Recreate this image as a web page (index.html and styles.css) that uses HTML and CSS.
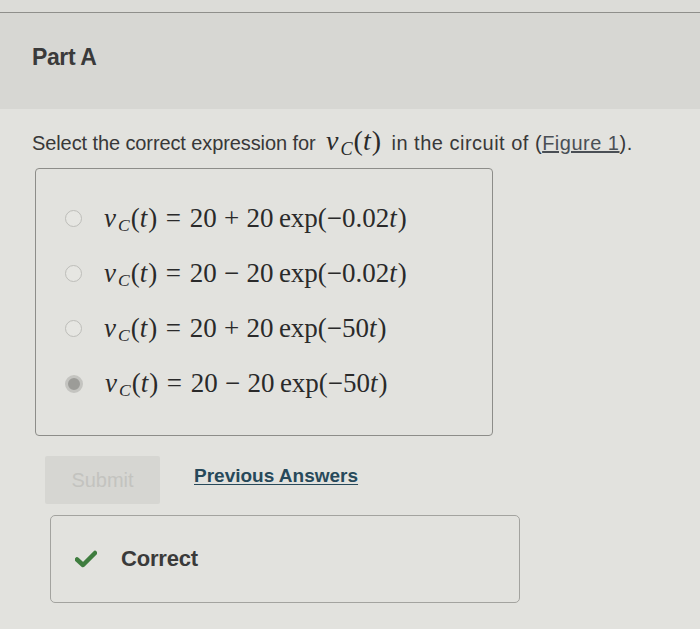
FILE: index.html
```html
<!DOCTYPE html>
<html>
<head>
<meta charset="utf-8">
<link rel="stylesheet" href="styles.css">
</head>
<body>
<div class="topstrip"></div>
<header class="part-header"><h2 class="part-title">Part A</h2></header>
<main class="content">
  <p class="question">Select the correct expression for <span class="m"><i>v</i><sub><i>C</i></sub>(<i>t</i>)</span> <span class="tail">in the circuit of (<a class="fig" href="#">Figure 1</a>).</span></p>
  <div class="options">
    <label class="opt"><span class="radio"></span><span class="m expr"><i>v</i><sub><i>C</i></sub>(<i>t</i>)<span class="rel">=</span>20<span class="bin">+</span>20<span class="fn">exp</span>(−0.02<i>t</i>)</span></label>
    <label class="opt"><span class="radio"></span><span class="m expr"><i>v</i><sub><i>C</i></sub>(<i>t</i>)<span class="rel">=</span>20<span class="bin">−</span>20<span class="fn">exp</span>(−0.02<i>t</i>)</span></label>
    <label class="opt"><span class="radio"></span><span class="m expr"><i>v</i><sub><i>C</i></sub>(<i>t</i>)<span class="rel">=</span>20<span class="bin">+</span>20<span class="fn">exp</span>(−50<i>t</i>)</span></label>
    <label class="opt"><span class="radio checked"></span><span class="m expr"><i>v</i><sub><i>C</i></sub>(<i>t</i>)<span class="rel">=</span>20<span class="bin">−</span>20<span class="fn">exp</span>(−50<i>t</i>)</span></label>
  </div>
  <div class="actions">
    <button class="submit" disabled>Submit</button>
    <a class="prev" href="#">Previous Answers</a>
  </div>
  <div class="feedback">
    <svg class="check" width="22" height="18" viewBox="0 0 22 18"><path d="M2 9.5 L8 15 L20 3" fill="none" stroke="#3f7d3f" stroke-width="4.5" stroke-linecap="round" stroke-linejoin="round"/></svg>
    <span class="correct">Correct</span>
  </div>
</main>
</body>
</html>
```
FILE: styles.css
```css
html, body {
  margin: 0;
  padding: 0;
  background: #e2e2de;
  font-family: "Liberation Sans", Arial, sans-serif;
  color: #333;
  height: 629px;
  overflow: hidden;
}
.topstrip {
  height: 12px;
  background: #dcdcd8;
  border-bottom: 1px solid #8f8f8b;
}
.part-header {
  background: #d7d7d3;
  height: 96px;
  padding: 30px 0 0 32px;
  box-sizing: border-box;
}
.part-title {
  margin: 0;
  font-size: 23px;
  line-height: 28px;
  font-weight: bold;
  color: #3a3a3a;
  letter-spacing: -0.4px;
}
.content {
  padding: 0 0 0 32px;
}
.question {
  margin: 18px 0 0 0;
  font-size: 20px;
  line-height: 28px;
  color: #383838;
  letter-spacing: -0.1px;
  white-space: nowrap;
}
.tail { letter-spacing: 0.5px; }
.m {
  font-family: "Liberation Serif", "DejaVu Serif", serif;
  color: #2a2a2a;
  letter-spacing: 0;
}
.question .m { font-size: 28px; margin: 0 5px 0 5px; }
.m sub {
  font-size: 65%;
  vertical-align: -0.25em;
  line-height: 0;
  margin-left: 1px;
}
.m i { padding-right: 1px; }
.rel { margin: 0 0.32em; }
.bin { margin: 0 0.27em; }
.fn { margin-left: 0.2em; }
.fig {
  color: #4a4f55;
}
.options {
  margin: 11px 0 0 3px;
  width: 458px;
  height: 268px;
  box-sizing: border-box;
  border: 1.5px solid #8d8d89;
  border-radius: 4px;
  padding: 35px 0 0 29px;
  display: flex;
  flex-direction: column;
  gap: 26px;
}
.opt {
  display: flex;
  align-items: center;
  gap: 22px;
  height: 29px;
}
.radio {
  width: 15px;
  height: 15px;
  border-radius: 50%;
  border: 1.5px solid #bdbdb9;
  background: #e6e6e2;
  flex: none;
}
.radio.checked {
  border: 3px solid #c4c4c0;
  background: #9c9c98;
  width: 12px;
  height: 12px;
}
.expr {
  font-size: 27px;
  line-height: 29px;
  white-space: nowrap;
}
.actions {
  margin: 20px 0 0 13px;
  display: flex;
  align-items: center;
  gap: 34px;
}
.submit {
  width: 115px;
  height: 48px;
  border: none;
  border-radius: 2px;
  background: #d6d6d2;
  color: #c3c3bf;
  font-family: "Liberation Sans", Arial, sans-serif;
  font-size: 20px;
  padding: 0;
}
.prev {
  font-size: 19px;
  font-weight: bold;
  color: #27495a;
  text-decoration: underline;
  text-underline-offset: 2px;
  margin-top: -8px;
}
.feedback {
  margin: 11px 0 0 18px;
  width: 470px;
  height: 88px;
  box-sizing: border-box;
  border: 1.5px solid #a3a39f;
  border-radius: 5px;
  display: flex;
  align-items: center;
  padding: 0 0 0 24px;
  gap: 24px;
}
.correct {
  font-size: 22px;
  font-weight: bold;
  color: #3a3a3a;
  letter-spacing: -0.2px;
}
```
